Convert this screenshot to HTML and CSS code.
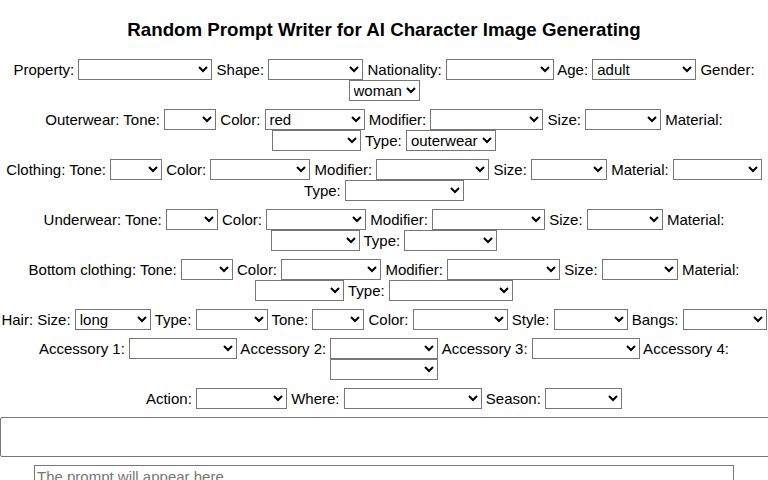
FILE: index.html
```html
<!DOCTYPE html>
<html lang="en">
<head>
<meta charset="utf-8">
<title>Random Prompt Writer for AI Character Image Generating</title>
<link rel="stylesheet" href="styles.css">
</head>
<body>
<h1 class="title">Random Prompt Writer for AI Character Image Generating</h1>
<div class="form">
  <div class="row">
    Property: <select class="w134"><option></option></select>
    Shape: <select class="w95"><option></option></select>
    Nationality: <select class="w108"><option></option></select>
    Age: <select class="w104"><option>adult</option></select>
    Gender: <select class="w71"><option>woman</option></select>
  </div>
  <div class="row">
    Outerwear: Tone: <select class="w52"><option></option></select>
    Color: <select class="w100"><option>red</option></select>
    Modifier: <select class="w113"><option></option></select>
    Size: <select class="w76"><option></option></select>
    Material: <select class="w89"><option></option></select>
    Type: <select class="w90"><option>outerwear</option></select>
  </div>
  <div class="row">
    Clothing: Tone: <select class="w52"><option></option></select>
    Color: <select class="w100"><option></option></select>
    Modifier: <select class="w113"><option></option></select>
    Size: <select class="w76"><option></option></select>
    Material: <select class="w89"><option></option></select>
    Type: <select class="w119"><option></option></select>
  </div>
  <div class="row">
    Underwear: Tone: <select class="w52"><option></option></select>
    Color: <select class="w100"><option></option></select>
    Modifier: <select class="w113"><option></option></select>
    Size: <select class="w76"><option></option></select>
    Material: <select class="w89"><option></option></select>
    Type: <select class="w93"><option></option></select>
  </div>
  <div class="row">
    Bottom clothing: Tone: <select class="w52"><option></option></select>
    Color: <select class="w100"><option></option></select>
    Modifier: <select class="w113"><option></option></select>
    Size: <select class="w76"><option></option></select>
    Material: <select class="w89"><option></option></select>
    Type: <select class="w124"><option></option></select>
  </div>
  <div class="row">
    Hair: Size: <select class="w76"><option>long</option></select>
    Type: <select class="w72"><option></option></select>
    Tone: <select class="w52"><option></option></select>
    Color: <select class="w95"><option></option></select>
    Style: <select class="w74"><option></option></select>
    Bangs: <select class="w84"><option></option></select>
  </div>
  <div class="row">
    Accessory 1: <select class="w108"><option></option></select>
    Accessory 2: <select class="w108"><option></option></select>
    Accessory 3: <select class="w108"><option></option></select>
    Accessory 4: <select class="w108"><option></option></select>
  </div>
  <div class="row">
    Action: <select class="w91"><option></option></select>
    Where: <select class="w138"><option></option></select>
    Season: <select class="w77"><option></option></select>
  </div>
</div>
<div class="output-wrap">
  <div class="output"></div>
</div>
<textarea class="prompt" placeholder="The prompt will appear here"></textarea>
</body>
</html>
```
FILE: styles.css
```css
html, body {
  margin: 0;
  padding: 0;
  background: #ffffff;
}
body {
  font-family: "Liberation Sans", Arial, sans-serif;
  font-size: 15px;
  color: #000000;
}
.title {
  font-size: 18.72px;
  font-weight: bold;
  text-align: center;
  margin: 18.72px 0;
}
.form {
  text-align: center;
}
.row {
  margin-bottom: 8px;
}
select {
  font-family: "Liberation Sans", Arial, sans-serif;
  font-size: 15px;
  color: #000000;
  background: #ffffff;
}
.w52 { width: 52px; }
.w71 { width: 71px; }
.w72 { width: 72px; }
.w74 { width: 74px; }
.w76 { width: 76px; }
.w77 { width: 77px; }
.w84 { width: 84px; }
.w89 { width: 89px; }
.w90 { width: 90px; }
.w91 { width: 91px; }
.w93 { width: 93px; }
.w95 { width: 95px; }
.w100 { width: 100px; }
.w104 { width: 104px; }
.w108 { width: 108px; }
.w113 { width: 113px; }
.w119 { width: 119px; }
.w124 { width: 124px; }
.w134 { width: 134px; }
.w138 { width: 138px; }
.output-wrap {
  overflow: hidden;
}
.output {
  width: calc(100% + 20px);
  height: 38px;
  border: 1px solid #767676;
  border-radius: 2px;
  background: #ffffff;
}
.prompt {
  display: block;
  box-sizing: border-box;
  width: 700px;
  height: 60px;
  margin: 8px auto 0;
  font-family: "Liberation Sans", Arial, sans-serif;
  font-size: 15px;
  border: 1px solid #767676;
  padding: 2px;
}
```
